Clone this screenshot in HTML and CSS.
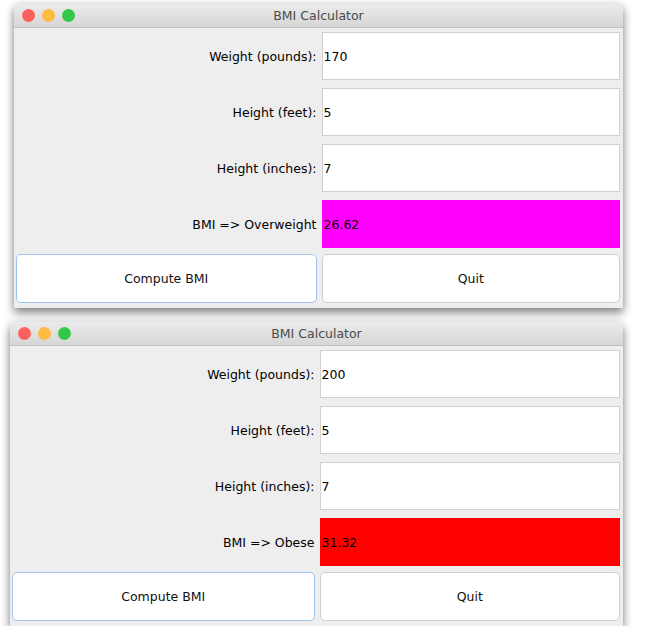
FILE: index.html
```html
<!DOCTYPE html>
<html>
<head>
<meta charset="utf-8">
<link rel="stylesheet" href="styles.css">
</head>
<body>
<div class="page">
  <div class="window w1">
    <div class="titlebar">
      <div class="lights"><span class="light red"></span><span class="light yellow"></span><span class="light green"></span></div>
      <div class="title">BMI Calculator</div>
    </div>
    <div class="content">
      <div class="label">Weight (pounds):</div>
      <div class="cell"><div class="field">170</div></div>
      <div class="label">Height (feet):</div>
      <div class="cell"><div class="field">5</div></div>
      <div class="label">Height (inches):</div>
      <div class="cell"><div class="field">7</div></div>
      <div class="label">BMI =&gt; Overweight</div>
      <div class="cell"><div class="field result magenta">26.62</div></div>
      <div class="cell btncell left"><div class="button focus">Compute BMI</div></div>
      <div class="cell btncell"><div class="button">Quit</div></div>
    </div>
  </div>
  <div class="window w2">
    <div class="titlebar">
      <div class="lights"><span class="light red"></span><span class="light yellow"></span><span class="light green"></span></div>
      <div class="title">BMI Calculator</div>
    </div>
    <div class="content">
      <div class="label">Weight (pounds):</div>
      <div class="cell"><div class="field">200</div></div>
      <div class="label">Height (feet):</div>
      <div class="cell"><div class="field">5</div></div>
      <div class="label">Height (inches):</div>
      <div class="cell"><div class="field">7</div></div>
      <div class="label">BMI =&gt; Obese</div>
      <div class="cell"><div class="field result red">31.32</div></div>
      <div class="cell btncell left"><div class="button focus">Compute BMI</div></div>
      <div class="cell btncell"><div class="button">Quit</div></div>
    </div>
  </div>
</div>
</body>
</html>
```
FILE: styles.css
```css
html, body {
  margin: 0;
  padding: 0;
  background: #ffffff;
}
body {
  font-family: "DejaVu Sans", "Liberation Sans", sans-serif;
  font-size: 12.5px;
  color: #000;
}
.page {
  display: flex;
  flex-direction: column;
  padding-top: 4px;
}
.window {
  background: #eeeeee;
  border-radius: 5px 5px 0 0;
  box-shadow: 0 5px 10px rgba(0,0,0,0.45), 0 0 8px rgba(0,0,0,0.12);
}
.w1 {
  margin-left: 14px;
  width: 609px;
}
.w2 {
  margin-top: 14px;
  margin-left: 10px;
  width: 613px;
}
.titlebar {
  height: 23px;
  border-radius: 5px 5px 0 0;
  background: linear-gradient(#ebebeb, #d6d6d6);
  border-bottom: 1px solid #c2c2c2;
  display: flex;
  align-items: center;
  position: relative;
}
.lights {
  display: flex;
  gap: 7px;
  padding-left: 8px;
}
.light {
  width: 13px;
  height: 13px;
  border-radius: 50%;
  display: block;
}
.light.red { background: #fc615d; }
.light.yellow { background: #fdbc40; }
.light.green { background: #34c84a; }
.title {
  position: absolute;
  left: 0;
  right: 0;
  text-align: center;
  font-size: 12.5px;
  color: #4a4a4a;
  pointer-events: none;
}
.content {
  display: grid;
  grid-template-columns: 1fr 1fr;
  grid-template-rows: repeat(5, 56px);
}
.label {
  display: flex;
  align-items: center;
  justify-content: flex-end;
  padding-right: 2px;
  white-space: nowrap;
}
.cell {
  display: flex;
}
.field {
  flex: 1;
  margin: 4px 3px 4px 3px;
  background: #ffffff;
  border: 1px solid #d0d0d0;
  display: flex;
  align-items: center;
  padding-left: 1px;
  color: #000;
}
.field.result {
  border-color: transparent;
}
.magenta { background: #ff00ff; }
.red { background: #ff0000; }
.btncell {
  padding: 2px 3px 5px 3px;
}
.btncell.left {
  padding-left: 2px;
  padding-right: 2px;
}
.button {
  flex: 1;
  background: #ffffff;
  border: 1px solid #cfcfcf;
  border-radius: 5px;
  display: flex;
  align-items: center;
  justify-content: center;
  color: #111;
}
.button.focus {
  border: 1.5px solid #9ec3f0;
}
```
